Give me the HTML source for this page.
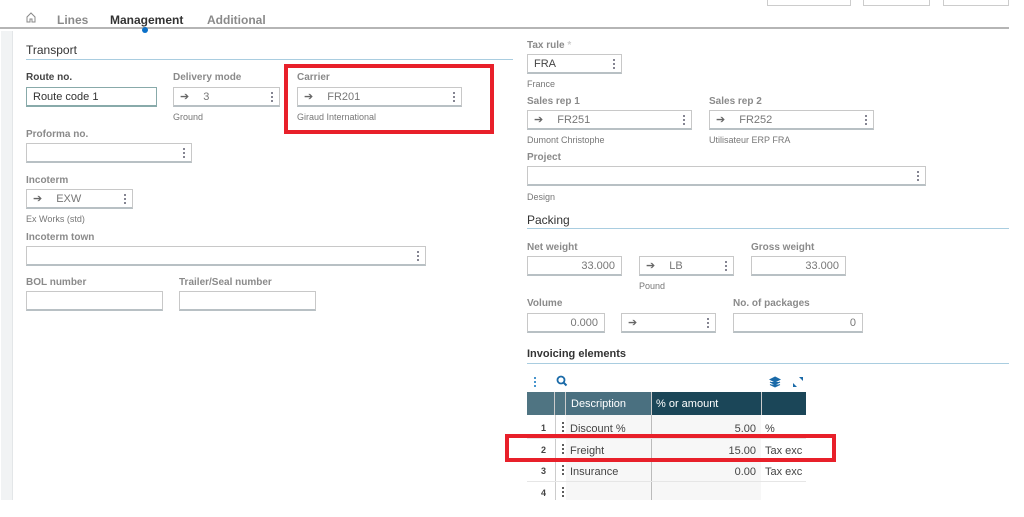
<!DOCTYPE html>
<html><head><style>
*{margin:0;padding:0;box-sizing:border-box}
body{width:1024px;height:517px;background:#fff;position:relative;overflow:hidden;font-family:"Liberation Sans",sans-serif;color:#333}
.a{position:absolute}
.lbl{position:absolute;font-size:10px;font-weight:bold;color:#8a8a8a;white-space:nowrap;margin-top:1px}
.lbl.d{color:#444}
.f{position:absolute;height:20px;border:1px solid #c8c8c8;border-bottom:2px solid #b8c0c4;background:#fff;font-size:11px;color:#777;line-height:18px;padding-left:6px;white-space:nowrap}
.f .ar{color:#666;margin-right:14px}
.f .m{position:absolute;right:6px;top:3px;width:2px;height:11px;background:radial-gradient(circle,#667 0.9px,transparent 1.1px) 0 0/2px 4px repeat-y}
.sub{position:absolute;font-size:9px;color:#777;white-space:nowrap;margin-top:1px}
.h{position:absolute;font-size:12px;color:#333;margin-top:1px}
.ln{position:absolute;height:1px;background:#a9cde0}
.num{text-align:right;padding-right:6px}
.red{position:absolute;border:4px solid #e8202a}
.tc{position:absolute;font-size:11px;color:#444;white-space:nowrap;margin-top:1px}
</style></head><body>
<div class="a" style="left:0;top:0;width:1009px;height:29px;background:#fff;border-bottom:2px solid #b5b5b5"></div>
<div class="a" style="left:1px;top:31px;width:12px;height:469px;background:#f1f3f4;border-right:1px solid #e3e6e8"></div>
<svg class="a" style="left:25px;top:11px" width="12" height="12" viewBox="0 0 12 12"><path d="M2 6 L6 2 L10 6 V11 H7 V8 H5 V11 H2 Z" fill="none" stroke="#888" stroke-width="1"/></svg>
<div class="a" style="left:57px;top:13px;font-size:12px;font-weight:bold;color:#8a8a8a">Lines</div>
<div class="a" style="left:110px;top:13px;font-size:12px;font-weight:bold;color:#333">Management</div>
<div class="a" style="left:207px;top:13px;font-size:12px;font-weight:bold;color:#8a8a8a">Additional</div>
<div class="a" style="left:142px;top:27px;width:6px;height:6px;border-radius:50%;background:#0a70c8"></div>
<div class="a" style="left:767px;top:-2px;width:84px;height:8px;border:1px solid #ccc"></div>
<div class="a" style="left:863px;top:-2px;width:67px;height:8px;border:1px solid #ccc"></div>
<div class="a" style="left:943px;top:-2px;width:66px;height:8px;border:1px solid #ccc"></div>

<div class="h" style="left:26px;top:42px">Transport</div>
<div class="ln" style="left:26px;top:59px;width:487px"></div>
<div class="lbl d" style="left:26px;top:71px">Route no.</div>
<div class="f" style="left:26px;top:87px;width:131px;color:#333;border-color:#8aa">Route code 1</div>
<div class="lbl" style="left:173px;top:71px">Delivery mode</div>
<div class="f" style="left:173px;top:87px;width:107px"><span class="ar">➔</span>3<i class="m"></i></div>
<div class="sub" style="left:173px;top:111px">Ground</div>
<div class="lbl" style="left:297px;top:71px">Carrier</div>
<div class="f" style="left:297px;top:87px;width:165px"><span class="ar">➔</span>FR201<i class="m"></i></div>
<div class="sub" style="left:297px;top:111px">Giraud International</div>
<div class="red" style="left:284px;top:64px;width:210px;height:70px"></div>
<div class="lbl" style="left:26px;top:128px">Proforma no.</div>
<div class="f" style="left:26px;top:143px;width:166px"><i class="m"></i></div>
<div class="lbl" style="left:26px;top:174px">Incoterm</div>
<div class="f" style="left:26px;top:189px;width:107px"><span class="ar">➔</span>EXW<i class="m"></i></div>
<div class="sub" style="left:26px;top:213px">Ex Works (std)</div>
<div class="lbl" style="left:26px;top:231px">Incoterm town</div>
<div class="f" style="left:26px;top:246px;width:400px"><i class="m"></i></div>
<div class="lbl" style="left:26px;top:276px">BOL number</div>
<div class="f" style="left:26px;top:291px;width:137px"></div>
<div class="lbl" style="left:179px;top:276px">Trailer/Seal number</div>
<div class="f" style="left:179px;top:291px;width:137px"></div>

<div class="lbl" style="left:527px;top:39px">Tax rule <span style="color:#ccc">*</span></div>
<div class="f" style="left:527px;top:54px;width:95px;color:#444">FRA<i class="m"></i></div>
<div class="sub" style="left:527px;top:78px">France</div>
<div class="lbl" style="left:527px;top:95px">Sales rep 1</div>
<div class="f" style="left:527px;top:110px;width:165px"><span class="ar">➔</span>FR251<i class="m"></i></div>
<div class="sub" style="left:527px;top:134px">Dumont Christophe</div>
<div class="lbl" style="left:709px;top:95px">Sales rep 2</div>
<div class="f" style="left:709px;top:110px;width:165px"><span class="ar">➔</span>FR252<i class="m"></i></div>
<div class="sub" style="left:709px;top:134px">Utilisateur ERP FRA</div>
<div class="lbl" style="left:527px;top:151px">Project</div>
<div class="f" style="left:527px;top:166px;width:399px"><i class="m"></i></div>
<div class="sub" style="left:527px;top:191px">Design</div>
<div class="h" style="left:527px;top:212px">Packing</div>
<div class="ln" style="left:527px;top:228px;width:482px"></div>
<div class="lbl" style="left:527px;top:241px">Net weight</div>
<div class="f num" style="left:527px;top:256px;width:95px">33.000</div>
<div class="f" style="left:639px;top:256px;width:95px"><span class="ar">➔</span>LB<i class="m"></i></div>
<div class="sub" style="left:639px;top:280px">Pound</div>
<div class="lbl" style="left:751px;top:241px">Gross weight</div>
<div class="f num" style="left:751px;top:256px;width:95px">33.000</div>
<div class="lbl" style="left:527px;top:297px">Volume</div>
<div class="f num" style="left:527px;top:313px;width:78px">0.000</div>
<div class="f" style="left:621px;top:313px;width:95px"><span class="ar">➔</span><i class="m"></i></div>
<div class="lbl" style="left:733px;top:297px">No. of packages</div>
<div class="f num" style="left:733px;top:313px;width:130px">0</div>

<div class="h" style="left:527px;top:347px;font-weight:bold;font-size:11px">Invoicing elements</div>
<div class="ln" style="left:527px;top:363px;width:482px"></div>
<div class="a" style="left:534px;top:376px;width:2px;height:11px;background:radial-gradient(circle,#1a7ac0 0.9px,transparent 1.1px) 0 0/2px 4px repeat-y"></div>
<svg class="a" style="left:556px;top:375px" width="12" height="12" viewBox="0 0 12 12"><circle cx="5" cy="5" r="3.5" fill="none" stroke="#1a6aa8" stroke-width="1.8"/><path d="M7.5 7.5 L10.5 10.5" stroke="#1a6aa8" stroke-width="2"/></svg>
<svg class="a" style="left:769px;top:376px" width="12" height="12" viewBox="0 0 12 12"><path d="M6 1 L11 3.5 L6 6 L1 3.5Z M1 6 L6 8.5 L11 6 M1 8.5 L6 11 L11 8.5" fill="#1a6aa8" stroke="#1a6aa8" stroke-width="1"/></svg>
<svg class="a" style="left:792px;top:376px" width="12" height="12" viewBox="0 0 12 12"><path d="M7 1 H11 V5 Z M1 7 V11 H5 Z" fill="#1a6aa8"/></svg>
<div class="a" style="left:527px;top:392px;width:28px;height:23px;background:#4f7482;border-right:1px solid #ccc"></div>
<div class="a" style="left:555px;top:392px;width:11px;height:23px;background:#4f7482;border-right:1px solid #ccc"></div>
<div class="a" style="left:566px;top:392px;width:85px;height:23px;background:#4a7080;color:#fff;font-size:11px;line-height:25px;padding-left:5px">Description</div>
<div class="a" style="left:651px;top:392px;width:110px;height:23px;background:#1b4658;color:#fff;font-size:11px;line-height:25px;padding-left:4px;border-left:1px solid #ccc">% or amount</div>
<div class="a" style="left:761px;top:392px;width:45px;height:23px;background:#1b4658;border-left:1px solid #ccc"></div>
<div class="a" style="left:555px;top:415px;width:1px;height:85px;background:#ccc"></div>
<div class="a" style="left:566px;top:415px;width:195px;height:85px;background:#f7f7f7"></div>
<div class="a" style="left:651px;top:415px;width:1px;height:85px;background:#bbb"></div>
<div class="a" style="left:527px;top:438px;width:279px;height:1px;background:#e6e6e6"></div>
<div class="a" style="left:527px;top:460px;width:279px;height:1px;background:#e6e6e6"></div>
<div class="a" style="left:527px;top:481px;width:279px;height:1px;background:#e6e6e6"></div>
<div class="tc" style="left:541px;top:422px;font-size:9px;font-weight:bold">1</div>
<div class="tc" style="left:541px;top:444px;font-size:9px;font-weight:bold">2</div>
<div class="tc" style="left:541px;top:465px;font-size:9px;font-weight:bold">3</div>
<div class="tc" style="left:541px;top:487px;font-size:9px;font-weight:bold">4</div>
<div class="a" style="left:562px;top:421px;width:2px;height:11px;background:radial-gradient(circle,#333 0.9px,transparent 1.1px) 0 0/2px 4px repeat-y"></div>
<div class="a" style="left:562px;top:443px;width:2px;height:11px;background:radial-gradient(circle,#333 0.9px,transparent 1.1px) 0 0/2px 4px repeat-y"></div>
<div class="a" style="left:562px;top:464px;width:2px;height:11px;background:radial-gradient(circle,#333 0.9px,transparent 1.1px) 0 0/2px 4px repeat-y"></div>
<div class="a" style="left:562px;top:486px;width:2px;height:11px;background:radial-gradient(circle,#333 0.9px,transparent 1.1px) 0 0/2px 4px repeat-y"></div>
<div class="tc" style="left:570px;top:422px">Discount %</div>
<div class="tc" style="left:570px;top:444px">Freight</div>
<div class="tc" style="left:570px;top:465px">Insurance</div>
<div class="tc" style="left:651px;top:422px;width:105px;text-align:right">5.00</div>
<div class="tc" style="left:651px;top:444px;width:105px;text-align:right">15.00</div>
<div class="tc" style="left:651px;top:465px;width:105px;text-align:right">0.00</div>
<div class="tc" style="left:765px;top:422px">%</div>
<div class="tc" style="left:765px;top:444px">Tax exc</div>
<div class="tc" style="left:765px;top:465px">Tax exc</div>
<div class="red" style="left:505px;top:434px;width:331px;height:28px"></div>
</body></html>
